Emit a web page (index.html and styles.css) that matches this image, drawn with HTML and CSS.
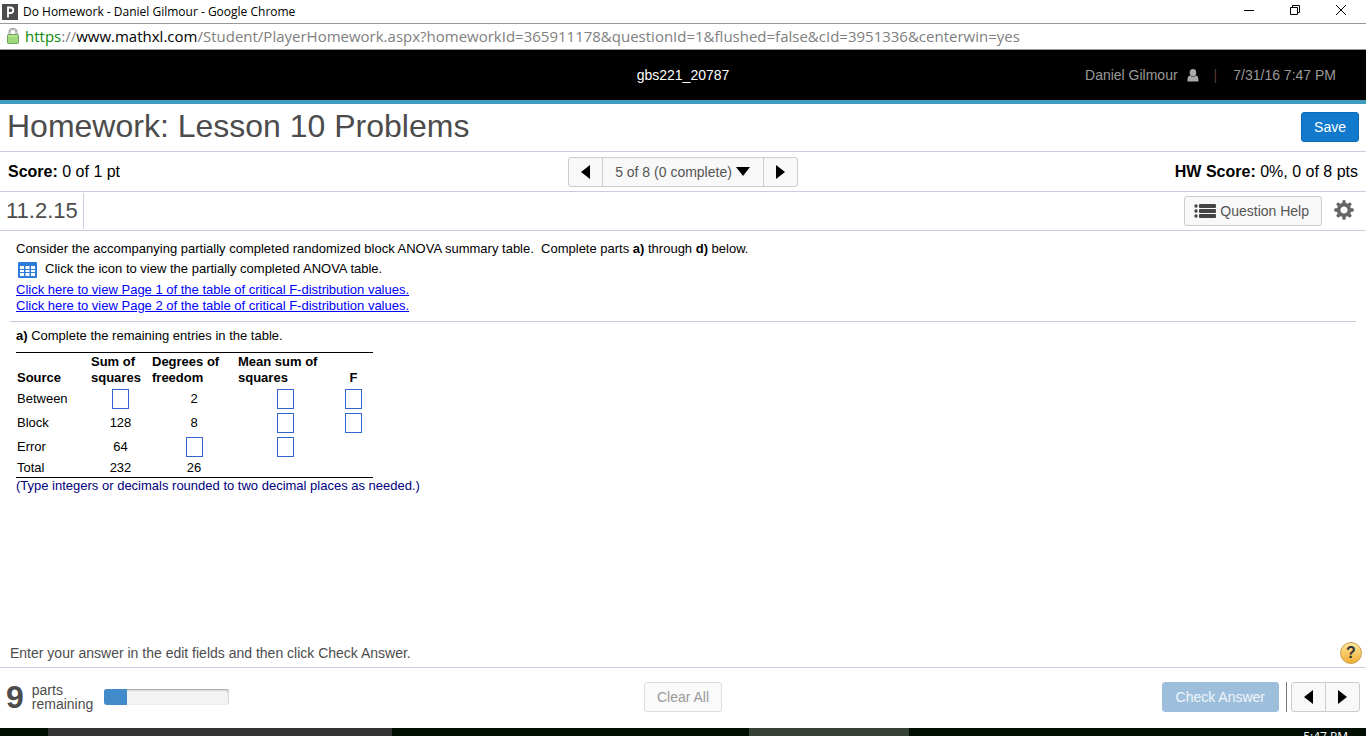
FILE: index.html
```html
<!DOCTYPE html>
<html lang="en">
<head>
    <meta charset="utf-8">
    <title>Do Homework - Daniel Gilmour</title>
    <link rel="stylesheet" href="styles.css">
</head>
<body>
    <!-- browser window -->
    <div class="titlebar">
        <svg class="favicon" width="16" height="16" viewBox="0 0 16 16"><rect width="16" height="16" fill="#4b4b4b"/><path d="M6 13.500V3.500H8.500a2.700 2.700 0 0 1 0 5.500H6" fill="none" stroke="#fff" stroke-width="1.800"/></svg>
        <span>Do Homework - Daniel Gilmour - Google Chrome</span>
        <div class="winbuttons">
            <button type="button" aria-label="Minimize"><svg width="12" height="12"><path d="M1 6.500h10" stroke="#000"/></svg></button>
            <button type="button" aria-label="Restore"><svg width="12" height="12"><path d="M1.500 3.500h7v7h-7zM3.500 3.500v-2h7v7h-2" fill="none" stroke="#000"/></svg></button>
            <button type="button" aria-label="Close"><svg width="12" height="12"><path d="M1 1l10 10M11 1L1 11" stroke="#000"/></svg></button>
        </div>
    </div>
    <div class="urlbar">
        <svg width="12" height="16" viewBox="0 0 12 16"><path d="M2.500 8V4a3.500 3 0 0 1 7 0v4" fill="none" stroke="#8a8a8a" stroke-width="2"/><path d="M2.500 8V4a3.500 3 0 0 1 7 0v4" fill="none" stroke="#ddd" stroke-width="0.800"/><rect x=".5" y="6.500" width="11" height="9" rx="1" fill="#9ed97c" stroke="#6f9f5e"/><path d="M1.500 8h9" stroke="#c5efa0"/></svg>
        <span class="url"><span class="scheme">https</span>://<span class="host">www.mathxl.com</span>/Student/PlayerHomework.aspx?homeworkId=365911178&amp;questionId=1&amp;flushed=false&amp;cId=3951336&amp;centerwin=yes</span>
    </div>

    <header class="course">
        <div class="coursename">gbs221_20787</div>
        <div class="user">
            <span>Daniel Gilmour</span>
            <svg width="12" height="13" viewBox="0 0 12 13"><ellipse cx="6" cy="3.700" rx="3.300" ry="3.700" fill="#aaa"/><path d="M3 6.500C1 7 .5 8.500.5 12.500h11C11.500 8.500 11 7 9 6.500 7.500 8.200 4.500 8.200 3 6.500z" fill="#aaa"/></svg>
            <span class="sep">|</span>
            <span>7/31/16 7:47 PM</span>
        </div>
    </header>

    <div class="row hwtitle">
        <h1>Homework: Lesson 10 Problems</h1>
        <button type="button" class="btn primary">Save</button>
    </div>

    <div class="row scores">
        <div><b>Score:</b> 0 of 1 pt</div>
        <div class="group">
            <button type="button" class="btn arrow" aria-label="Previous question"><svg width="9" height="14"><path d="M9 0v14L0 7z"/></svg></button>
            <button type="button" class="btn pick">5 of 8 (0 complete) <svg width="14" height="9"><path d="M0 0h14L7 9z"/></svg></button>
            <button type="button" class="btn arrow" aria-label="Next question"><svg width="9" height="14"><path d="M0 0v14l9-7z"/></svg></button>
        </div>
        <div class="right"><b>HW Score:</b> 0%, 0 of 8 pts</div>
    </div>

    <div class="row section">
        <h2>11.2.15</h2>
        <div class="tools">
            <button type="button" class="btn help"><svg width="22" height="14" viewBox="0 0 22 14" fill="#444"><circle cx="2" cy="2" r="1.700"/><circle cx="2" cy="7" r="1.700"/><circle cx="2" cy="12" r="1.700"/><rect x="5" width="17" height="4" rx="1"/><rect x="5" y="5" width="17" height="4" rx="1"/><rect x="5" y="10" width="17" height="4" rx="1"/></svg>Question Help</button>
            <button type="button" class="gear" aria-label="Settings"><svg width="20" height="20" viewBox="-10 -10 20 20"><circle r="5.400" fill="none" stroke="#666" stroke-width="3.600"/><g fill="#666"><path id="t" d="M-1.900-6.500L-1.400-9.700h2.800L1.900-6.500z"/><use href="#t" transform="rotate(45)"/><use href="#t" transform="rotate(90)"/><use href="#t" transform="rotate(135)"/><use href="#t" transform="rotate(180)"/><use href="#t" transform="rotate(225)"/><use href="#t" transform="rotate(270)"/><use href="#t" transform="rotate(315)"/></g></svg></button>
        </div>
    </div>

    <main>
        <div class="question">
            <p>Consider the accompanying partially completed randomized block ANOVA summary table.&nbsp; Complete parts <b>a)</b> through <b>d)</b> below.</p>
            <p class="iconline">
                <button type="button" aria-label="ANOVA table"><svg width="19" height="16" viewBox="0 0 19 16"><rect width="19" height="16" rx="1" fill="#2f7bd9"/><path d="M2 4h4v3H2zM7.500 4h4v3h-4zM13 4h4v3h-4zM2 8h4v2H2zM7.500 8h4v2h-4zM13 8h4v2h-4zM2 11h4v3H2zM7.500 11h4v3h-4zM13 11h4v3h-4z" fill="#fff"/></svg></button>
                <span>Click the icon to view the partially completed ANOVA table.</span>
            </p>
            <p><a href="#">Click here to view Page 1 of the table of critical F-distribution values.</a></p>
            <p><a href="#">Click here to view Page 2 of the table of critical F-distribution values.</a></p>
        </div>
        <div class="part">
            <p><b>a)</b> Complete the remaining entries in the table.</p>
            <table>
                <colgroup><col class="c1"><col class="c2"><col class="c3"><col class="c4"><col class="c5"></colgroup>
                <thead>
                    <tr><th>Source</th><th>Sum of<br>squares</th><th>Degrees of<br>freedom</th><th>Mean sum of<br>squares</th><th class="f">F</th></tr>
                </thead>
                <tbody>
                    <tr><td>Between</td><td><input type="text" aria-label="Between sum of squares"></td><td>2</td><td><input type="text" aria-label="Between mean sum of squares"></td><td><input type="text" aria-label="Between F"></td></tr>
                    <tr><td>Block</td><td>128</td><td>8</td><td><input type="text" aria-label="Block mean sum of squares"></td><td><input type="text" aria-label="Block F"></td></tr>
                    <tr><td>Error</td><td>64</td><td><input type="text" aria-label="Error degrees of freedom"></td><td><input type="text" aria-label="Error mean sum of squares"></td><td></td></tr>
                    <tr class="total"><td>Total</td><td>232</td><td>26</td><td></td><td></td></tr>
                </tbody>
            </table>
            <p class="hint">(Type integers or decimals rounded to two decimal places as needed.)</p>
        </div>
    </main>

    <div class="instruct">
        <span>Enter your answer in the edit fields and then click Check Answer.</span>
        <button type="button" class="qmark">?</button>
    </div>

    <footer>
        <div class="progress">
            <span class="count">9</span>
            <span class="parts">parts<br>remaining</span>
            <div class="bar"><div class="fill" style="width:18.4%"></div></div>
        </div>
        <button type="button" class="btn" disabled>Clear All</button>
        <div class="actions">
            <button type="button" class="btn check" disabled>Check Answer</button>
            <div class="group">
                <button type="button" class="btn arrow" aria-label="Previous part"><svg width="9" height="14"><path d="M9 0v14L0 7z"/></svg></button>
                <button type="button" class="btn arrow" aria-label="Next part"><svg width="9" height="14"><path d="M0 0v14l9-7z"/></svg></button>
            </div>
        </div>
    </footer>

    <div class="taskbar">
        <div class="task"></div>
        <div class="task green"></div>
        <span class="clock">5:47 PM</span>
    </div>
</body>
</html>
```
FILE: styles.css
```css
*{box-sizing:border-box;}
body{margin:0;min-height:100vh;display:flex;flex-direction:column;background:#fff;color:#000;font-family:Arial,"Liberation Sans",sans-serif;font-size:13px;}
h1,h2,p{margin:0;font-weight:normal;}
button{font-family:inherit;padding:0;border:0;background:none;}
svg{display:block;}

/* browser window */
.titlebar{display:flex;align-items:center;gap:5px;height:24px;padding-left:2px;border-bottom:1px solid #999;font-family:"Open Sans","Noto Sans",sans-serif;font-size:12px;}
.winbuttons{display:flex;gap:34px;margin-left:auto;padding:0 19px 3px 0;}
.urlbar{display:flex;align-items:center;gap:6px;height:26px;padding:0 0 2px 7px;border-bottom:1px solid #999;font-family:"Open Sans","Noto Sans",sans-serif;font-size:15px;color:#808080;white-space:nowrap;}
.scheme{color:#0b8a0b;}
.host{color:#000;}

.course{display:grid;grid-template-columns:1fr auto 1fr;align-items:center;height:54px;padding:0 30px;background:#000;border-bottom:4px solid #3f9cbd;font-size:14px;}
.coursename{grid-column:2;color:#fff;}
.user{display:flex;align-items:center;justify-content:flex-end;gap:9px;color:#999;}
.sep{margin:0 7px 0 6px;color:#5a3a30;}

.row{display:flex;align-items:center;justify-content:space-between;padding:0 8px;border-bottom:1px solid #ccd;}
.hwtitle{height:48px;padding:0 7px 2px;color:#4c4c4c;}
h1{font-size:32px;line-height:44px;padding-bottom:2px;}
.scores{display:grid;grid-template-columns:1fr auto 1fr;height:40px;font-size:16px;}
.right{text-align:right;}
.section{height:39px;padding-left:6px;}
h2{align-self:stretch;margin:1px 0;padding-right:5px;border-right:1px solid #ccd;font-size:22px;line-height:36px;color:#4c4c4c;}
.tools{display:flex;align-items:center;gap:12px;padding-right:4px;}
.gear{padding-bottom:2px;}

.btn{display:flex;align-items:center;justify-content:center;gap:4px;height:30px;padding:0 12px;border:1px solid #ccc;border-radius:3px;background:#f8f8f8;color:#555;font-size:14px;white-space:nowrap;}
.btn:disabled{color:#999;border-color:#ddd;background:#fafafa;}
.btn.primary{background:#117acc;border-color:#0c6bb8;color:#fff;}
.btn.check:disabled{padding:0 13px;background:#9ebfdb;border-color:#9ebfdb;color:#f0f6fb;}
.btn.help{padding:0 12px 0 9px;}
.btn.pick{padding:0 13px 0 12px;}
.group{display:flex;}
.group .btn{border-radius:0;margin-left:-1px;}
.group .btn:first-child{border-radius:3px 0 0 3px;margin-left:0;}
.group .btn:last-child{border-radius:0 3px 3px 0;}
.btn.arrow{width:35px;padding:0;}

main{flex:1;padding:0 10px;line-height:16px;}
.question{padding:10px 6px 7px;border-bottom:1px solid #c5cbdb;}
.iconline{display:flex;gap:8px;padding:4px 0 4px 2px;}
.iconline button{height:16px;margin-top:1px;}
a{color:#00f;}
.part{padding:6px;}
table{margin-top:8px;width:357px;table-layout:fixed;border-collapse:separate;border-spacing:0;border-top:1px solid #000;border-bottom:1px solid #000;}
.c1{width:74px;}
.c2{width:61px;}
.c3{width:86px;}
.c4{width:97px;}
.c5{width:39px;}
th{padding:1px;text-align:left;vertical-align:bottom;white-space:nowrap;}
th.f,td{text-align:center;}
td{height:24px;padding:0 1px;}
td:first-child{text-align:left;}
.total td{height:18px;}
td input{display:block;margin:0 auto;width:17px;height:20px;padding:0;border:1px solid #36c;background:#fff;}
.hint{color:#000080;}

.instruct{display:flex;align-items:center;justify-content:space-between;height:28px;padding:0 4px 0 10px;font-size:14px;color:#4c4c4c;}
.qmark{width:22px;height:22px;border:1px solid #c9a050;border-radius:50%;background:linear-gradient(#fde79a,#f0ae35);color:#333;font-size:16px;font-weight:bold;line-height:20px;}

footer{display:grid;grid-template-columns:1fr auto 1fr;align-items:center;height:61px;padding:0 6px 2px;border-top:1px solid #ccd;}
.progress{display:flex;align-items:center;gap:8px;color:#4c4c4c;}
.count{font-size:32px;font-weight:bold;}
.parts{font-size:14px;line-height:14px;}
.bar{width:125px;height:16px;margin-left:3px;border-radius:3px;overflow:hidden;background:#f3f3f3;box-shadow:inset 0 1px 2px #999;}
.fill{height:100%;background:#428bca;}
.actions{display:flex;justify-content:flex-end;gap:7px;}
.actions .group{padding-left:4px;border-left:1px solid #777;}

.taskbar{display:flex;height:8px;padding:0 18px 0 48px;overflow:hidden;background:#000e03;}
.task{width:344px;background:#333;}
.task.green{width:160px;margin-left:357px;background:#374037;}
.clock{margin-left:auto;padding-top:3px;font-family:"Open Sans",sans-serif;font-size:12px;line-height:12px;color:#fff;}
```
